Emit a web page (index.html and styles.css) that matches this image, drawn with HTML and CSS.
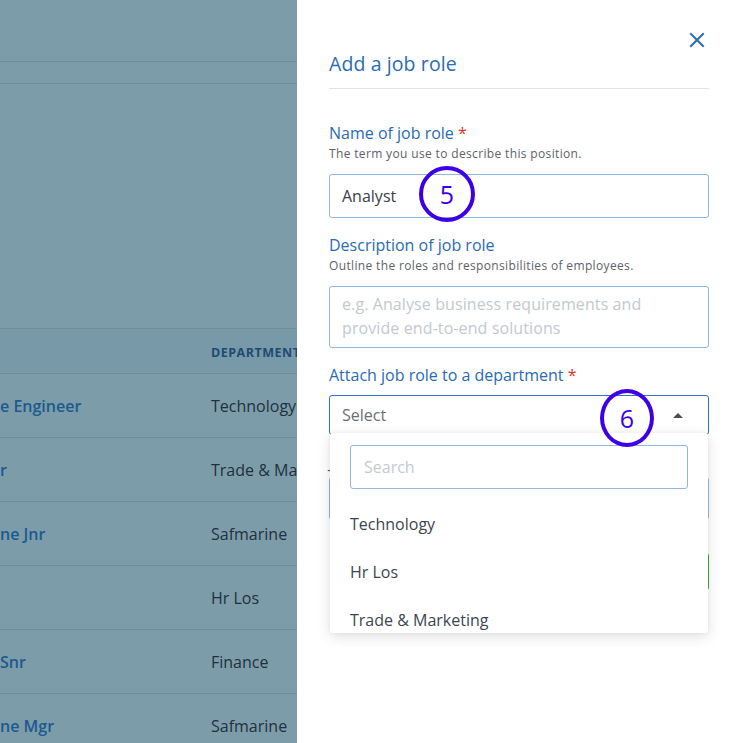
FILE: index.html
```html
<!DOCTYPE html>
<html>
<head>
<meta charset="utf-8">
<link rel="stylesheet" href="styles.css">
</head>
<body>
<div class="screen">
  <div class="backdrop">
    <div class="bd-top"></div>
    <div class="bd-bar"></div>
    <div class="bd-space"></div>
    <div class="bd-head">
      <div class="c-name"></div>
      <div class="c-dept">DEPARTMENT</div>
    </div>
    <div class="bd-row"><div class="c-name">e Engineer</div><div class="c-dept">Technology</div></div>
    <div class="bd-row"><div class="c-name">r</div><div class="c-dept">Trade &amp; Marketing</div></div>
    <div class="bd-row"><div class="c-name">ne Jnr</div><div class="c-dept">Safmarine</div></div>
    <div class="bd-row"><div class="c-name"></div><div class="c-dept">Hr Los</div></div>
    <div class="bd-row"><div class="c-name">Snr</div><div class="c-dept">Finance</div></div>
    <div class="bd-row"><div class="c-name">ne Mgr</div><div class="c-dept">Safmarine</div></div>
  </div>

  <div class="panel">
    <div class="close-row">
      <button class="close" aria-label="Close">
        <svg width="16" height="16" viewBox="0 0 16 16"><path d="M2 2 L14 14 M14 2 L2 14" stroke="#2b6cb5" stroke-width="2" stroke-linecap="square"/></svg>
      </button>
    </div>
    <h1 class="title">Add a job role</h1>
    <div class="divider"></div>

    <div class="field first">
      <div class="label">Name of job role <span class="req">*</span></div>
      <div class="help">The term you use to describe this position.</div>
      <div class="input-wrap">
        <div class="input">Analyst</div>
        <div class="marker m5">5</div>
      </div>
    </div>

    <div class="field">
      <div class="label">Description of job role</div>
      <div class="help">Outline the roles and responsibilities of employees.</div>
      <div class="textarea">e.g. Analyse business requirements and provide end-to-end solutions</div>
    </div>

    <div class="field">
      <div class="label">Attach job role to a department <span class="req">*</span></div>
      <div class="select-wrap">
        <div class="select">
          <span>Select</span>
          <span class="caret"></span>
        </div>
        <div class="marker m6">6</div>
        <div class="dropdown">
          <div class="search">Search</div>
          <div class="options">
            <div class="opt">Technology</div>
            <div class="opt">Hr Los</div>
            <div class="opt">Trade &amp; Marketing</div>
            <div class="opt">Finance</div>
            <div class="opt">Safmarine</div>
          </div>
        </div>
      </div>
    </div>

    <div class="field hidden-field">
      <div class="label">Job level</div>
      <div class="input"></div>
    </div>
    <div class="actions">
      <button class="btn">Save</button>
    </div>
  </div>
</div>
</body>
</html>
```

FILE: styles.css
```css
* { box-sizing: border-box; }
html, body { margin: 0; padding: 0; }
body {
  font-family: "Open Sans", "Liberation Sans", sans-serif;
  background: #fff;
}
.screen {
  display: grid;
  grid-template-columns: 297px 1fr;
  width: 739px;
  height: 743px;
  overflow: hidden;
}

/* backdrop */
.backdrop {
  background: #7d9ca9;
  overflow: hidden;
  display: flex;
  flex-direction: column;
}
.bd-top { height: 62px; border-bottom: 1px solid #6f8e9c; flex: none; }
.bd-bar { height: 22px; border-bottom: 1px solid #6f8e9c; flex: none; }
.bd-space { height: 245px; border-bottom: 1px solid #6f8e9c; flex: none; }
.bd-head, .bd-row {
  display: grid;
  grid-template-columns: 211px 300px;
  align-items: center;
  flex: none;
  white-space: nowrap;
}
.bd-head {
  height: 45px;
  background: #7899a8;
  border-bottom: 1px solid #6f8e9c;
}
.bd-head .c-dept {
  font-size: 12.5px;
  font-weight: 700;
  letter-spacing: 0.5px;
  color: #1f4b73;
  padding-top: 2px;
}
.bd-row {
  height: 64px;
  border-bottom: 1px solid #6f8e9c;
}
.bd-row .c-name {
  font-size: 16px;
  font-weight: 600;
  color: #1c5a8f;
}
.bd-row .c-dept {
  font-size: 16px;
  color: #1e3140;
}

/* panel */
.panel {
  background: #fff;
  padding: 0 30px 0 32px;
  display: flex;
  flex-direction: column;
}
.close-row {
  display: flex;
  justify-content: flex-end;
  margin-top: 32px;
  height: 16px;
  padding-right: 4px;
}
.close {
  border: 0;
  background: none;
  padding: 0;
  width: 16px;
  height: 16px;
  display: block;
  cursor: pointer;
}
.close svg { display: block; }
.title {
  margin: 4px 0 0;
  font-size: 19.5px;
  letter-spacing: 0.1px;
  line-height: 24px;
  font-weight: 400;
  color: #2a6bb4;
}
.divider {
  height: 1px;
  background: #e1e4e8;
  margin-top: 12px;
}
.field { display: flex; flex-direction: column; }
.field.first { margin-top: 34px; }
.label {
  font-size: 16px;
  line-height: 20px;
  color: #2a6bb4;
}
.req { color: #d9342b; }
.help {
  margin-top: 3px;
  font-size: 12px;
  letter-spacing: 0.35px;
  line-height: 16px;
  color: #5d6268;
}
.input-wrap, .select-wrap { position: relative; }
.input {
  margin-top: 12px;
  height: 44px;
  border: 1px solid #93b7df;
  border-radius: 3px;
  padding: 0 12px;
  display: flex;
  align-items: center;
  font-size: 16px;
  color: #3b4046;
}
.field + .field { margin-top: 17px; }
.textarea {
  margin-top: 12px;
  height: 62px;
  border: 1px solid #93b7df;
  border-radius: 3px;
  padding: 5px 12px;
  font-size: 16px;
  letter-spacing: 0.1px;
  line-height: 24px;
  color: #c3c9cf;
}
.select-wrap { margin-top: 10px; }
.select {
  height: 40px;
  border: 1px solid #2f73c6;
  border-radius: 3px;
  padding: 0 12px;
  display: flex;
  align-items: center;
  justify-content: space-between;
  font-size: 16px;
  color: #6a6f75;
}
.caret {
  width: 0;
  height: 0;
  border-left: 5px solid transparent;
  border-right: 5px solid transparent;
  border-bottom: 5px solid #4a4f55;
  margin-right: 13px;
}
.dropdown {
  position: absolute;
  top: 38px;
  left: 1px;
  right: 1px;
  height: 200px;
  background: #fff;
  border-radius: 3px;
  box-shadow: 0 4px 14px rgba(0,0,0,0.12), 0 0 4px rgba(0,0,0,0.05);
  padding: 12px 20px 0;
  z-index: 5;
  overflow: hidden;
}
.search {
  height: 44px;
  border: 1px solid #93b7df;
  border-radius: 3px;
  padding: 0 13px;
  display: flex;
  align-items: center;
  font-size: 16px;
  color: #c4cad0;
}
.options { margin-top: 11px; }
.opt {
  height: 48px;
  display: flex;
  align-items: center;
  font-size: 16px;
  color: #3d4650;
}
.marker {
  position: absolute;
  border: 4px solid #3d00e6;
  border-radius: 50%;
  display: flex;
  align-items: center;
  justify-content: center;
  font-size: 25px;
  color: #3d00e6;
  background: transparent;
  z-index: 6;
}
.m5 { left: 90px; top: 4px; width: 56px; height: 56px; }
.m6 { left: 271px; top: -6px; width: 54px; height: 58px; }

.hidden-field { margin-top: 12px; }
.hidden-field .input { margin-top: 5px; height: 43px; }
.actions {
  display: flex;
  justify-content: flex-end;
  margin-top: 33px;
}
.btn {
  height: 37px;
  padding: 0 24px;
  border: 0;
  border-radius: 3px;
  background: #43a342;
  color: #fff;
  font-family: inherit;
  font-size: 15px;
}
```
